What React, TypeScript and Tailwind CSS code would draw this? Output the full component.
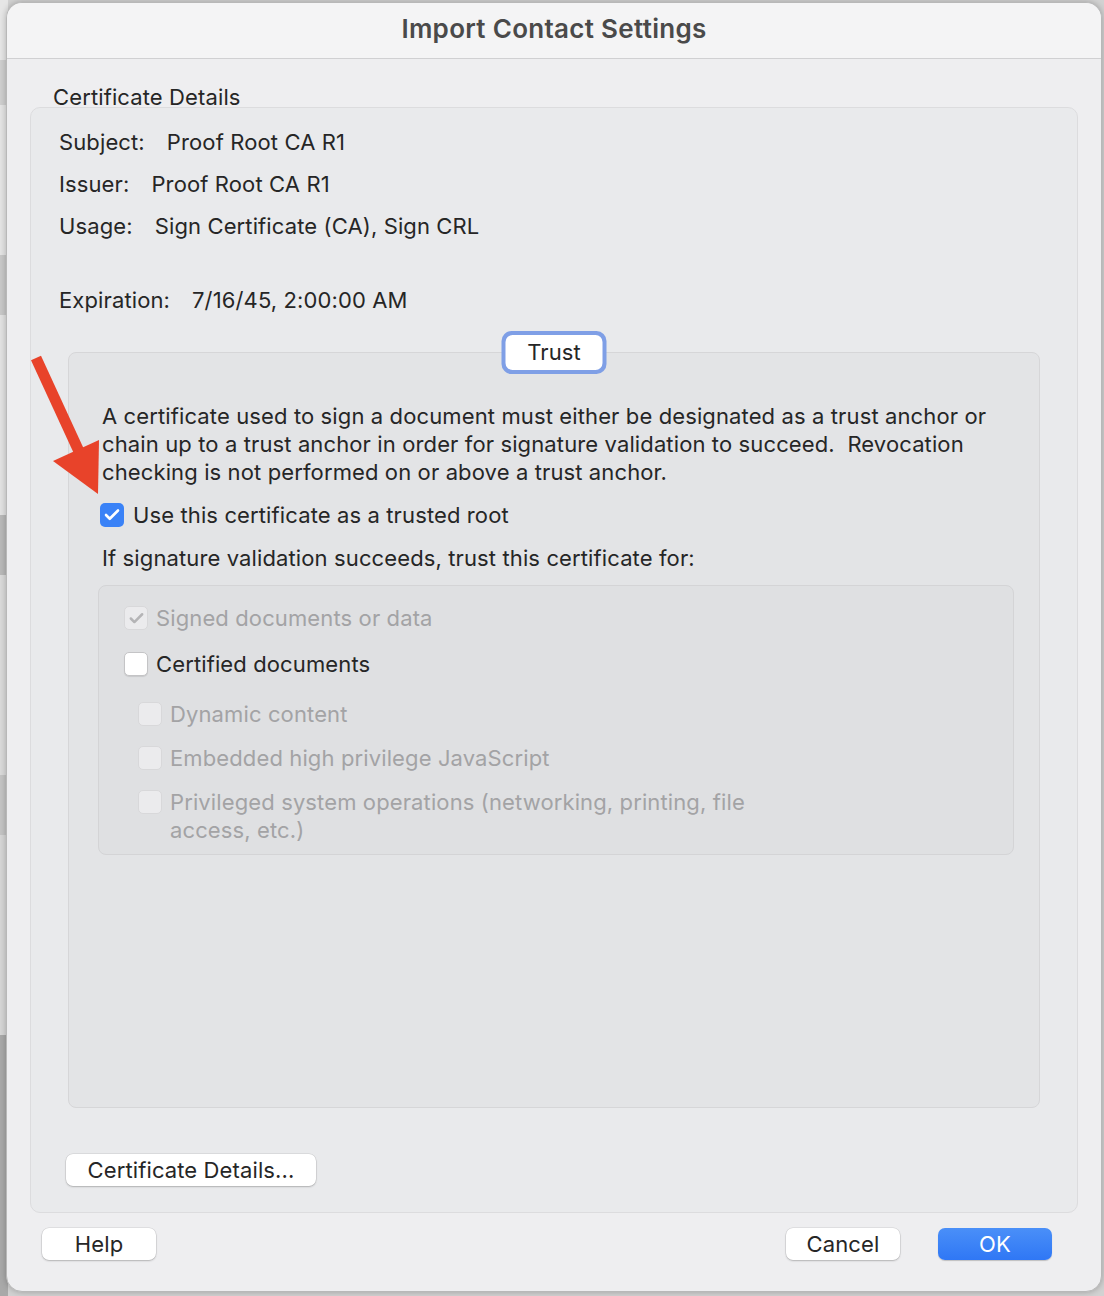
import { Check } from "lucide-react";

const font = { fontFamily: "Inter, 'Noto Sans', sans-serif" };

function Box({
  checked,
  disabled,
  blue,
}: {
  checked?: boolean;
  disabled?: boolean;
  blue?: boolean;
}) {
  if (blue) {
    return (
      <span className="flex h-[24px] w-[24px] shrink-0 items-center justify-center rounded-[5px] bg-[#3a82f7]">
        <Check className="h-[18px] w-[18px] text-white" strokeWidth={3.5} />
      </span>
    );
  }
  return (
    <span
      className={
        disabled
          ? "flex h-[24px] w-[24px] shrink-0 items-center justify-center rounded-[5px] border border-[#d8d8da] bg-[#ebebed]"
          : "flex h-[24px] w-[24px] shrink-0 items-center justify-center rounded-[5px] border border-[#c4c4c6] bg-white shadow-[0_1px_1px_rgba(0,0,0,0.1)]"
      }
    >
      {checked && (
        <Check className="h-[17px] w-[17px] text-[#b4b4b6]" strokeWidth={3.5} />
      )}
    </span>
  );
}

function Btn({ children, primary }: { children: React.ReactNode; primary?: boolean }) {
  return (
    <button
      className={
        primary
          ? "h-[32px] w-[114px] rounded-[7px] bg-gradient-to-b from-[#4a8ff8] to-[#2f77f5] text-[22px] tracking-[0.15px] text-white shadow-[0_1px_1px_rgba(0,0,0,0.2)]"
          : "h-[32px] w-[114px] rounded-[7px] bg-white text-[22px] tracking-[0.15px] text-[#262626] shadow-[0_0_0_0.5px_rgba(0,0,0,0.12),0_1px_2px_rgba(0,0,0,0.2)]"
      }
    >
      {children}
    </button>
  );
}

export default function App() {
  return (
    <div className="relative h-[1296px] w-[1104px] overflow-hidden bg-[#d2d2d2]" style={font}>
      {/* background window strip */}
      <div className="absolute left-0 top-0 flex h-full w-[8px] flex-col bg-[#dcdcdc]">
        <div className="h-[60px] bg-[#e6e6e6]" />
        <div className="h-[45px] bg-[#cfcfcf]" />
        <div className="h-[150px] bg-[#e4e4e4]" />
        <div className="h-[60px] bg-[#c8c8c8]" />
        <div className="h-[200px] bg-[#e2e2e2]" />
        <div className="h-[60px] bg-[#b9b9b9]" />
        <div className="h-[200px] bg-[#dadada]" />
        <div className="h-[60px] bg-[#c4c4c4]" />
        <div className="h-[200px] bg-[#d6d6d6]" />
        <div className="flex-1 bg-[#a9a9a9]" />
      </div>

      <div className="relative ml-[6px] mt-[2px] flex h-[1290px] w-[1096px] flex-col overflow-hidden rounded-[16px] border border-[#b8b8b8] bg-[#eeeef0] shadow-[0_0_6px_rgba(0,0,0,0.25)]">
        <div className="flex h-[56px] shrink-0 items-center justify-center border-b border-[#d0d0d2] bg-[#f4f4f5] pb-[4px]">
          <span className="text-[26px] font-semibold tracking-[0.3px] text-[#4a4a4a]">Import Contact Settings</span>
        </div>

        <div className="flex flex-1 flex-col px-[23px] pt-[26px] text-[22px] tracking-[0.12px] text-[#262626]">
          <div className="pl-[23px] leading-[24px]">Certificate Details</div>
          <div className="mt-[-2px] flex h-[1106px] flex-col rounded-[10px] border border-[#dcdcde] bg-[#e9eaec]">
            <div className="flex flex-col pl-[28px] pt-[13px] leading-[42px]">
              <div className="flex gap-[22px]">
                <span>Subject:</span>
                <span>Proof Root CA R1</span>
              </div>
              <div className="flex gap-[22px]">
                <span>Issuer:</span>
                <span>Proof Root CA R1</span>
              </div>
              <div className="flex gap-[22px]">
                <span>Usage:</span>
                <span>Sign Certificate (CA), Sign CRL</span>
              </div>
              <div className="mt-[32px] flex gap-[22px]">
                <span>Expiration:</span>
                <span>7/16/45, 2:00:00 AM</span>
              </div>
            </div>

            <div className="relative mx-[37px] mt-[31px] h-[756px] rounded-[8px] border border-[#d6d6d8] bg-[#e3e4e6]">
              <div className="absolute left-1/2 top-[-22px] -translate-x-1/2 rounded-[10px] bg-[#7f9fe6] p-[4px]">
                <div className="flex h-[35px] w-[97px] items-center justify-center rounded-[7px] bg-white">
                  Trust
                </div>
              </div>

              <div className="px-[33px] pt-[49px]">
                <p className="leading-[28px]">
                  A certificate used to sign a document must either be designated as a trust anchor or
                  chain up to a trust anchor in order for signature validation to succeed.&nbsp; Revocation
                  checking is not performed on or above a trust anchor.
                </p>
                <div className="mt-[15px] flex items-center gap-[9px] leading-[28px]">
                  <span className="-ml-[2px]">
                    <Box blue />
                  </span>
                  <span>Use this certificate as a trusted root</span>
                </div>
                <div className="mt-[15px] leading-[28px]">
                  If signature validation succeeds, trust this certificate for:
                </div>
              </div>

              <div className="ml-[29px] mr-[25px] mt-[13px] flex h-[270px] flex-col rounded-[8px] border border-[#d4d4d6] bg-[#dfe0e2] pl-[25px] pt-[18px] leading-[28px]">
                <div className="flex items-center gap-[8px] text-[#a3a3a5]">
                  <Box checked disabled />
                  <span>Signed documents or data</span>
                </div>
                <div className="mt-[18px] flex items-center gap-[8px]">
                  <Box />
                  <span>Certified documents</span>
                </div>
                <div className="ml-[14px] mt-[22px] flex items-center gap-[8px] text-[#a3a3a5]">
                  <Box disabled />
                  <span>Dynamic content</span>
                </div>
                <div className="ml-[14px] mt-[16px] flex items-center gap-[8px] text-[#a3a3a5]">
                  <Box disabled />
                  <span>Embedded high privilege JavaScript</span>
                </div>
                <div className="ml-[14px] mt-[16px] flex items-start gap-[8px] text-[#a3a3a5]">
                  <span className="mt-[2px]">
                    <Box disabled />
                  </span>
                  <span>
                    Privileged system operations (networking, printing, file
                    <br />
                    access, etc.)
                  </span>
                </div>
              </div>
            </div>

            <div className="ml-[35px] mt-[46px]">
              <button className="h-[32px] w-[250px] rounded-[7px] bg-white text-[#262626] shadow-[0_0_0_0.5px_rgba(0,0,0,0.12),0_1px_2px_rgba(0,0,0,0.2)]">
                Certificate Details...
              </button>
            </div>
          </div>

          <div className="mt-[15px] flex items-center pl-[12px] pr-[26px]">
            <Btn>Help</Btn>
            <div className="flex-1" />
            <Btn>Cancel</Btn>
            <div className="w-[38px]" />
            <Btn primary>OK</Btn>
          </div>
        </div>
      </div>

      {/* red annotation arrow */}
      <svg className="pointer-events-none absolute left-0 top-0" width="1104" height="1296">
        <line x1="36" y1="358" x2="82" y2="458" stroke="#e8432a" strokeWidth="11" />
        <polygon points="53,461 99,440 98,494" fill="#e8432a" />
      </svg>
    </div>
  );
}
